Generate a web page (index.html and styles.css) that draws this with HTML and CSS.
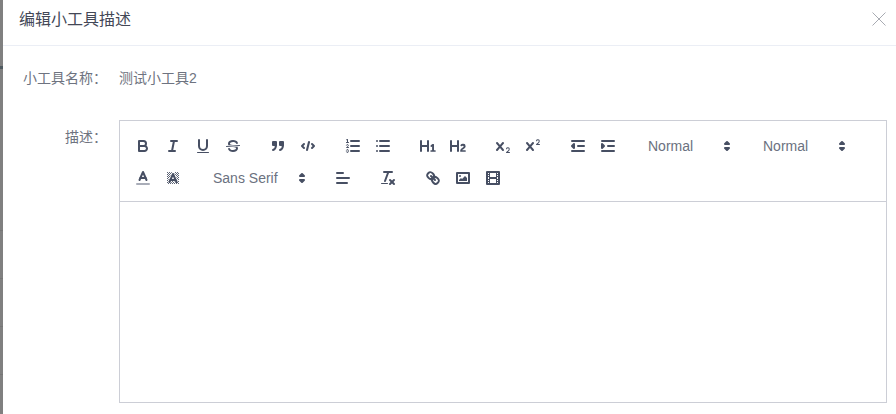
FILE: index.html
```html
<!DOCTYPE html>
<html lang="zh-CN">
<head>
    <meta charset="UTF-8">
    <meta name="viewport" content="width=device-width, initial-scale=1.0">
    <title>编辑小工具描述</title>
    <link rel="stylesheet" href="styles.css">
</head>
<body>
    <div class="backdrop"></div>
    <div class="dialog">
        <div class="dialog-header">
            <span class="dialog-title">编辑小工具描述</span>
            <svg class="close-icon" viewBox="0 0 14 14"><path d="M0.5 0.5L13.5 13.5M13.5 0.5L0.5 13.5"/></svg>
        </div>

        <div class="form-row name-row">
            <label class="form-label">小工具名称：</label>
            <div class="form-value">测试小工具2</div>
        </div>

        <div class="form-row">
            <label class="form-label">描述：</label>
            <div class="editor">
                <div class="toolbar">
                    <span class="formats">
                        <button class="tb-btn"><svg viewBox="0 0 18 18"><path class="st" d="M5,4H9.5A2.5,2.5,0,0,1,12,6.5v0A2.5,2.5,0,0,1,9.5,9H5A0,0,0,0,1,5,9V4A0,0,0,0,1,5,4Z"/><path class="st" d="M5,9h5.5A2.5,2.5,0,0,1,13,11.5v0A2.5,2.5,0,0,1,10.5,14H5a0,0,0,0,1,0,0V9A0,0,0,0,1,5,9Z"/></svg></button>
                        <button class="tb-btn"><svg viewBox="0 0 18 18"><line class="st" x1="7" x2="13" y1="4" y2="4"/><line class="st" x1="5" x2="11" y1="14" y2="14"/><line class="st" x1="8" x2="10" y1="14" y2="4"/></svg></button>
                        <button class="tb-btn"><svg viewBox="0 0 18 18"><path class="st" d="M5,3V9a4.012,4.012,0,0,0,4,4H9a4.012,4.012,0,0,0,4-4V3"/><rect class="fl" height="1" rx="0.5" ry="0.5" width="12" x="3" y="15"/></svg></button>
                        <button class="tb-btn"><svg viewBox="0 0 18 18"><line class="st thin" x1="15.5" x2="2.5" y1="8.5" y2="9.5"/><path class="fl" d="M9.007,8C6.542,7.791,6,7.519,6,6.5,6,5.792,7.283,5,9,5c1.571,0,2.765.679,2.969,1.309a1,1,0,0,0,1.9-.618C13.356,4.106,11.354,3,9,3,6.2,3,4,4.538,4,6.5a3.2,3.2,0,0,0,.5,1.843Z"/><path class="fl" d="M8.984,10C11.457,10.208,12,10.479,12,11.5c0,.708-1.283,1.5-3,1.5-1.571,0-2.765-.679-2.969-1.309a1,1,0,1,0-1.9.618C4.644,13.894,6.646,15,9,15c2.8,0,5-1.538,5-3.5a3.2,3.2,0,0,0-.5-1.843Z"/></svg></button>
                    </span>
                    <span class="formats">
                        <button class="tb-btn"><svg viewBox="0 0 18 18"><rect class="st fl" height="3" width="3" x="4" y="5"/><rect class="st fl" height="3" width="3" x="11" y="5"/><path class="st" d="M7,8c0,4.031-3,5-3,5"/><path class="st" d="M14,8c0,4.031-3,5-3,5"/></svg></button>
                        <button class="tb-btn"><svg viewBox="0 0 18 18"><polyline class="st" points="5 7 3 9 5 11"/><polyline class="st" points="13 7 15 9 13 11"/><line class="st" x1="10" x2="8" y1="5" y2="13"/></svg></button>
                    </span>
                    <span class="formats">
                        <button class="tb-btn"><svg viewBox="0 0 18 18"><line class="st" x1="7" x2="15" y1="4" y2="4"/><line class="st" x1="7" x2="15" y1="9" y2="9"/><line class="st" x1="7" x2="15" y1="14" y2="14"/><line class="st thin" x1="2.5" x2="4.5" y1="5.5" y2="5.5"/><path class="fl" d="M3.5,6A0.5,0.5,0,0,1,3,5.5V3.085l-0.276.138A0.5,0.5,0,0,1,2.053,3c-0.124-.247-0.023-0.324.224-0.447l1-.5A0.5,0.5,0,0,1,4,2.5v3A0.5,0.5,0,0,1,3.5,6Z"/><path class="st thin" d="M4.5,10.5h-2c0-.234,1.85-1.076,1.85-2.234A0.959,0.959,0,0,0,2.5,8.156"/><path class="st thin" d="M2.5,14.846a0.959,0.959,0,0,0,1.85-.109A0.7,0.7,0,0,0,3.75,14a0.688,0.688,0,0,0,.6-0.736,0.959,0.959,0,0,0-1.85-.109"/></svg></button>
                        <button class="tb-btn"><svg viewBox="0 0 18 18"><line class="st" x1="6" x2="15" y1="4" y2="4"/><line class="st" x1="6" x2="15" y1="9" y2="9"/><line class="st" x1="6" x2="15" y1="14" y2="14"/><line class="st" x1="3" x2="3" y1="4" y2="4"/><line class="st" x1="3" x2="3" y1="9" y2="9"/><line class="st" x1="3" x2="3" y1="14" y2="14"/></svg></button>
                    </span>
                    <span class="formats">
                        <button class="tb-btn"><svg viewBox="0 0 18 18"><path class="fl" d="M10,4V14a1,1,0,0,1-2,0V10H3v4a1,1,0,0,1-2,0V4A1,1,0,0,1,3,4V8H8V4a1,1,0,0,1,2,0Zm6.06787,9.209H14.98975V7.59863a.54085.54085,0,0,0-.605-.60547h-.62744a1.01119,1.01119,0,0,0-.748.29688L11.645,8.56641a.5435.5435,0,0,0-.022.8584l.28613.30762a.53861.53861,0,0,0,.84717.0332l.09912-.08789a1.2137,1.2137,0,0,0,.2417-.35254h.02246s-.01123.30859-.01123.60547V13.209H12.041a.54085.54085,0,0,0-.605.60547v.43945a.54085.54085,0,0,0,.605.60547h4.02686a.54085.54085,0,0,0,.605-.60547v-.43945A.54085.54085,0,0,0,16.06787,13.209Z"/></svg></button>
                        <button class="tb-btn"><svg viewBox="0 0 18 18"><path class="fl" d="M16.73975,13.81445v.43945a.54085.54085,0,0,1-.605.60547H11.855a.58392.58392,0,0,1-.64893-.60547V14.0127c0-2.90527,3.39941-3.42187,3.39941-4.55469a.77675.77675,0,0,0-.84717-.78125,1.17684,1.17684,0,0,0-.83594.38477c-.2749.26367-.561.374-.85791.13184l-.4292-.34082c-.30811-.24219-.38525-.51758-.1543-.81445a2.97155,2.97155,0,0,1,2.45361-1.17676,2.45393,2.45393,0,0,1,2.68408,2.40918c0,2.45312-3.1792,2.92676-3.27832,3.93848h2.79443A.54085.54085,0,0,1,16.73975,13.81445ZM9,3A.99974.99974,0,0,0,8,4V8H3V4A1,1,0,0,0,1,4V14a1,1,0,0,0,2,0V10H8v4a1,1,0,0,0,2,0V4A.99974.99974,0,0,0,9,3Z"/></svg></button>
                    </span>
                    <span class="formats">
                        <button class="tb-btn"><svg viewBox="0 0 18 18"><path class="fl" d="M15.5,15H13.861a3.858,3.858,0,0,0,1.914-2.975,1.8,1.8,0,0,0-1.6-1.751A1.921,1.921,0,0,0,12.021,11.7a0.50013,0.50013,0,1,0,.957.291h0a0.914,0.914,0,0,1,1.053-.725,0.81,0.81,0,0,1,.744.762c0,1.076-1.16971,1.86982-1.93971,2.43082A1.45639,1.45639,0,0,0,12,15.5a0.5,0.5,0,0,0,.5.5h3A0.5,0.5,0,0,0,15.5,15Z"/><path class="fl" d="M9.65,5.241a1,1,0,0,0-1.409.108L6,7.964,3.759,5.349A1,1,0,0,0,2.192,6.59178Q2.21541,6.6213,2.241,6.649L4.684,9.5,2.241,12.35A1,1,0,0,0,3.71,13.70722q0.02557-.02768.049-0.05722L6,11.036,8.241,13.65a1,1,0,1,0,1.567-1.24277Q9.78459,12.3777,9.759,12.35L7.316,9.5,9.759,6.651A1,1,0,0,0,9.65,5.241Z"/></svg></button>
                        <button class="tb-btn"><svg viewBox="0 0 18 18"><path class="fl" d="M15.5,7H13.861a4.015,4.015,0,0,0,1.914-2.975,1.8,1.8,0,0,0-1.6-1.751A1.922,1.922,0,0,0,12.021,3.7a0.5,0.5,0,1,0,.957.291,0.917,0.917,0,0,1,1.053-.725,0.81,0.81,0,0,1,.744.762c0,1.077-1.164,1.925-1.934,2.486A1.423,1.423,0,0,0,12,7.5a0.5,0.5,0,0,0,.5.5h3A0.5,0.5,0,0,0,15.5,7Z"/><path class="fl" d="M9.65,5.241a1,1,0,0,0-1.409.108L6,7.964,3.759,5.349A1,1,0,0,0,2.192,6.59178Q2.21541,6.6213,2.241,6.649L4.684,9.5,2.241,12.35A1,1,0,0,0,3.71,13.70722q0.02557-.02768.049-0.05722L6,11.036,8.241,13.65a1,1,0,1,0,1.567-1.24277Q9.78459,12.3777,9.759,12.35L7.316,9.5,9.759,6.651A1,1,0,0,0,9.65,5.241Z"/></svg></button>
                    </span>
                    <span class="formats">
                        <button class="tb-btn"><svg viewBox="0 0 18 18"><line class="st" x1="3" x2="15" y1="14" y2="14"/><line class="st" x1="3" x2="15" y1="4" y2="4"/><line class="st" x1="9" x2="15" y1="9" y2="9"/><polyline class="st fl" points="5 7 5 11 3 9 5 7"/></svg></button>
                        <button class="tb-btn"><svg viewBox="0 0 18 18"><line class="st" x1="3" x2="15" y1="14" y2="14"/><line class="st" x1="3" x2="15" y1="4" y2="4"/><line class="st" x1="9" x2="15" y1="9" y2="9"/><polyline class="st fl" points="3 7 3 11 5 9 3 7"/></svg></button>
                    </span>
                    <span class="formats">
                        <span class="picker"><span class="picker-label">Normal</span><svg viewBox="0 0 18 18"><polygon class="st fl" points="7 11 9 13 11 11 7 11"/><polygon class="st fl" points="7 7 9 5 11 7 7 7"/></svg></span>
                    </span>
                    <span class="formats">
                        <span class="picker"><span class="picker-label">Normal</span><svg viewBox="0 0 18 18"><polygon class="st fl" points="7 11 9 13 11 11 7 11"/><polygon class="st fl" points="7 7 9 5 11 7 7 7"/></svg></span>
                    </span>
                    <span class="formats">
                        <button class="tb-btn"><svg viewBox="0 0 18 18"><line class="st label-line" x1="3" x2="15" y1="15" y2="15"/><polyline class="st" points="5.5 11 9 3 12.5 11"/><line class="st" x1="11.63" x2="6.38" y1="9" y2="9"/></svg></button>
                        <button class="tb-btn"><svg viewBox="0 0 18 18"><defs><pattern id="hatch" width="2" height="2" patternUnits="userSpaceOnUse"><rect class="hatch-dot" width="1" height="1"/><rect class="hatch-dot" x="1" y="1" width="1" height="1"/></pattern></defs><rect fill="url(#hatch)" x="3" y="3" width="12" height="12"/><polyline class="halo" points="5.5 13 9 5 12.5 13"/><polyline class="st" points="5.5 13 9 5 12.5 13"/><line class="st" x1="11.63" x2="6.38" y1="11" y2="11"/></svg></button>
                    </span>
                    <span class="formats">
                        <span class="picker picker-font"><span class="picker-label">Sans Serif</span><svg viewBox="0 0 18 18"><polygon class="st fl" points="7 11 9 13 11 11 7 11"/><polygon class="st fl" points="7 7 9 5 11 7 7 7"/></svg></span>
                    </span>
                    <span class="formats">
                        <button class="tb-btn"><svg viewBox="0 0 18 18"><line class="st" x1="3" x2="15" y1="9" y2="9"/><line class="st" x1="3" x2="13" y1="14" y2="14"/><line class="st" x1="3" x2="9" y1="4" y2="4"/></svg></button>
                    </span>
                    <span class="formats">
                        <button class="tb-btn"><svg viewBox="0 0 18 18"><line class="st" x1="5" x2="13" y1="3" y2="3"/><line class="st" x1="6" x2="9.35" y1="12" y2="3"/><line class="st" x1="11" x2="15" y1="11" y2="15"/><line class="st" x1="15" x2="11" y1="11" y2="15"/><rect class="fl" height="1" rx="0.5" ry="0.5" width="7" x="2" y="14"/></svg></button>
                    </span>
                    <span class="formats">
                        <button class="tb-btn"><svg viewBox="0 0 18 18"><line class="st" x1="7" x2="11" y1="7" y2="11"/><path class="st" d="M8.9,4.577a3.476,3.476,0,0,1,.36,4.679A3.476,3.476,0,0,1,4.577,8.9C3.185,7.5,2.035,6.4,4.217,4.217S7.5,3.185,8.9,4.577Z"/><path class="st" d="M13.423,9.1a3.476,3.476,0,0,0-4.679-.36,3.476,3.476,0,0,0,.36,4.679c1.392,1.392,2.5,2.542,4.679.36S14.815,10.5,13.423,9.1Z"/></svg></button>
                        <button class="tb-btn"><svg viewBox="0 0 18 18"><rect class="st" height="10" width="12" x="3" y="4"/><circle class="fl" cx="6" cy="7" r="1"/><polyline class="fl" points="5 12 5 11 7 9 8 10 11 7 13 9 13 12 5 12"/></svg></button>
                        <button class="tb-btn"><svg viewBox="0 0 18 18"><rect class="st" height="12" width="12" x="3" y="3"/><rect class="fl" height="12" width="1" x="5" y="3"/><rect class="fl" height="12" width="1" x="12" y="3"/><rect class="fl" height="2" width="8" x="5" y="8"/><rect class="fl" height="1" width="3" x="3" y="5"/><rect class="fl" height="1" width="3" x="3" y="7"/><rect class="fl" height="1" width="3" x="3" y="10"/><rect class="fl" height="1" width="3" x="3" y="12"/><rect class="fl" height="1" width="3" x="12" y="5"/><rect class="fl" height="1" width="3" x="12" y="7"/><rect class="fl" height="1" width="3" x="12" y="10"/><rect class="fl" height="1" width="3" x="12" y="12"/></svg></button>
                    </span>
                </div>
                <div class="editor-body"></div>
            </div>
        </div>
    </div>
</body>
</html>
```

FILE: styles.css
```css
html, body {
    height: 414px;
    overflow: hidden;
}
body {
    margin: 0;
    display: flex;
    background-color: #fff;
    font-family: "Liberation Sans", "Noto Sans CJK SC", sans-serif;
}
.backdrop {
    width: 3px;
    flex: none;
    background: linear-gradient(to bottom,
        #808080 66px, #4f5a60 66px, #4f5a60 69px, #808080 69px,
        #808080 230px, #767676 230px, #767676 231px, #808080 231px,
        #808080 278px, #767676 278px, #767676 279px, #808080 279px,
        #808080 326px, #767676 326px, #767676 327px, #808080 327px,
        #808080 374px, #767676 374px, #767676 375px, #808080 375px);
}
.dialog {
    flex: 1;
    min-width: 0;
}
.dialog-header {
    height: 35px;
    border-bottom: 1px solid #ebeef5;
    display: flex;
    align-items: center;
    justify-content: space-between;
    padding: 0 10px 10px 16px;
}
.dialog-title {
    font-size: 16px;
    color: #434756;
}
.close-icon {
    width: 14px;
    height: 14px;
    margin-top: 3px;
}
.close-icon path {
    stroke: #a8abb2;
    stroke-width: 1;
    fill: none;
}
.form-row {
    display: flex;
    align-items: flex-start;
}
.name-row {
    margin-top: 12px;
    margin-bottom: 22px;
}
.form-label {
    width: 104px;
    flex: none;
    margin-right: 12px;
    text-align: right;
    font-size: 14px;
    line-height: 34px;
    color: #6e7380;
}
.name-row .form-label,
.form-value {
    line-height: 40px;
}
.form-value {
    font-size: 14px;
    color: #6e7380;
}

/* editor */
.editor {
    width: 768px;
    box-sizing: border-box;
    border: 1px solid #ccced6;
    height: 283px;
    display: flex;
    flex-direction: column;
}
.toolbar {
    display: flex;
    flex-wrap: wrap;
    padding: 9px 7px 7px;
    border-bottom: 1px solid #ccced6;
}
.formats {
    display: flex;
    align-items: center;
    height: 32px;
    margin-right: 15px;
}
.tb-btn {
    width: 30px;
    height: 24px;
    padding: 3px 5px 3px 7px;
    box-sizing: border-box;
    border: none;
    background: none;
    cursor: pointer;
}
.tb-btn svg {
    display: block;
    width: 18px;
    height: 18px;
}
.picker {
    width: 100px;
    height: 24px;
    display: flex;
    align-items: center;
    justify-content: space-between;
    padding: 0 1px 0 11px;
    box-sizing: border-box;
    font-size: 14px;
    color: #6b7180;
}
.picker-font {
    width: 110px;
}
.picker svg {
    width: 18px;
    height: 18px;
}
.st {
    fill: none;
    stroke: #474f63;
    stroke-width: 2;
    stroke-linecap: round;
    stroke-linejoin: round;
}
.fl,
.st.fl {
    fill: #474f63;
}
.thin {
    stroke-width: 1;
}
.label-line {
    stroke: #a9adb8;
}
.hatch-dot {
    fill: #5d6475;
}
.halo {
    fill: none;
    stroke: #fff;
    stroke-width: 3.5;
}
.editor-body {
    flex: 1;
}
```
